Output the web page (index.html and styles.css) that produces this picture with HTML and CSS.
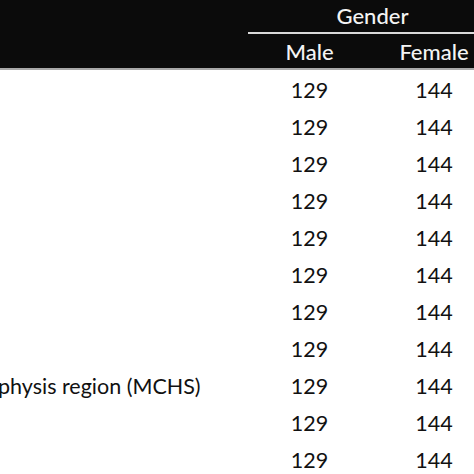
FILE: index.html
```html
<!DOCTYPE html>
<html>
<head>
<meta charset="utf-8">
<link rel="stylesheet" href="styles.css">
</head>
<body>
<div class="table">
  <div class="head">
    <div class="group-row">
      <div class="blank"></div>
      <div class="group">Gender</div>
    </div>
    <div class="sub-row">
      <div class="blank"></div>
      <div class="col">Male</div>
      <div class="col">Female</div>
    </div>
  </div>
  <div class="body">
    <div class="row"><div class="label"></div><div class="num">129</div><div class="num">144</div></div>
    <div class="row"><div class="label"></div><div class="num">129</div><div class="num">144</div></div>
    <div class="row"><div class="label"></div><div class="num">129</div><div class="num">144</div></div>
    <div class="row"><div class="label"></div><div class="num">129</div><div class="num">144</div></div>
    <div class="row"><div class="label"></div><div class="num">129</div><div class="num">144</div></div>
    <div class="row"><div class="label"></div><div class="num">129</div><div class="num">144</div></div>
    <div class="row"><div class="label"></div><div class="num">129</div><div class="num">144</div></div>
    <div class="row"><div class="label"></div><div class="num">129</div><div class="num">144</div></div>
    <div class="row"><div class="label"><span class="cut">physis region (MCHS)</span></div><div class="num">129</div><div class="num">144</div></div>
    <div class="row"><div class="label"></div><div class="num">129</div><div class="num">144</div></div>
    <div class="row"><div class="label"></div><div class="num">129</div><div class="num">144</div></div>
  </div>
</div>
</body>
</html>
```
FILE: styles.css
```css
html, body {
  margin: 0;
  padding: 0;
  background: #ffffff;
  overflow: hidden;
}
body {
  width: 474px;
  height: 474px;
  font-family: Lato, "Open Sans", sans-serif;
  color: #111111;
}
.table {
  width: 497px;
}
.head {
  background: #0b0b0b;
  color: #f4f4f4;
  border-bottom: 2px solid #a9a9a9;
}
.group-row {
  display: grid;
  grid-template-columns: 248px 249px;
  height: 34px;
}
.group {
  font-size: 22px;
  font-weight: 500;
  text-align: center;
  line-height: 32px;
  border-bottom: 2px solid #d9d9d9;
}
.sub-row {
  display: grid;
  grid-template-columns: 248px 123px 126px;
  height: 34px;
}
.col {
  font-size: 22px;
  font-weight: 500;
  text-align: center;
  line-height: 36px;
}
.body {
  padding-top: 1px;
}
.row {
  display: grid;
  grid-template-columns: 248px 123px 126px;
  height: 37px;
  align-items: center;
  font-size: 21.5px;
}
.num {
  text-align: center;
}
.label {
  white-space: nowrap;
  overflow: visible;
}
.cut {
  display: inline-block;
  margin-left: -2px;
}
```
